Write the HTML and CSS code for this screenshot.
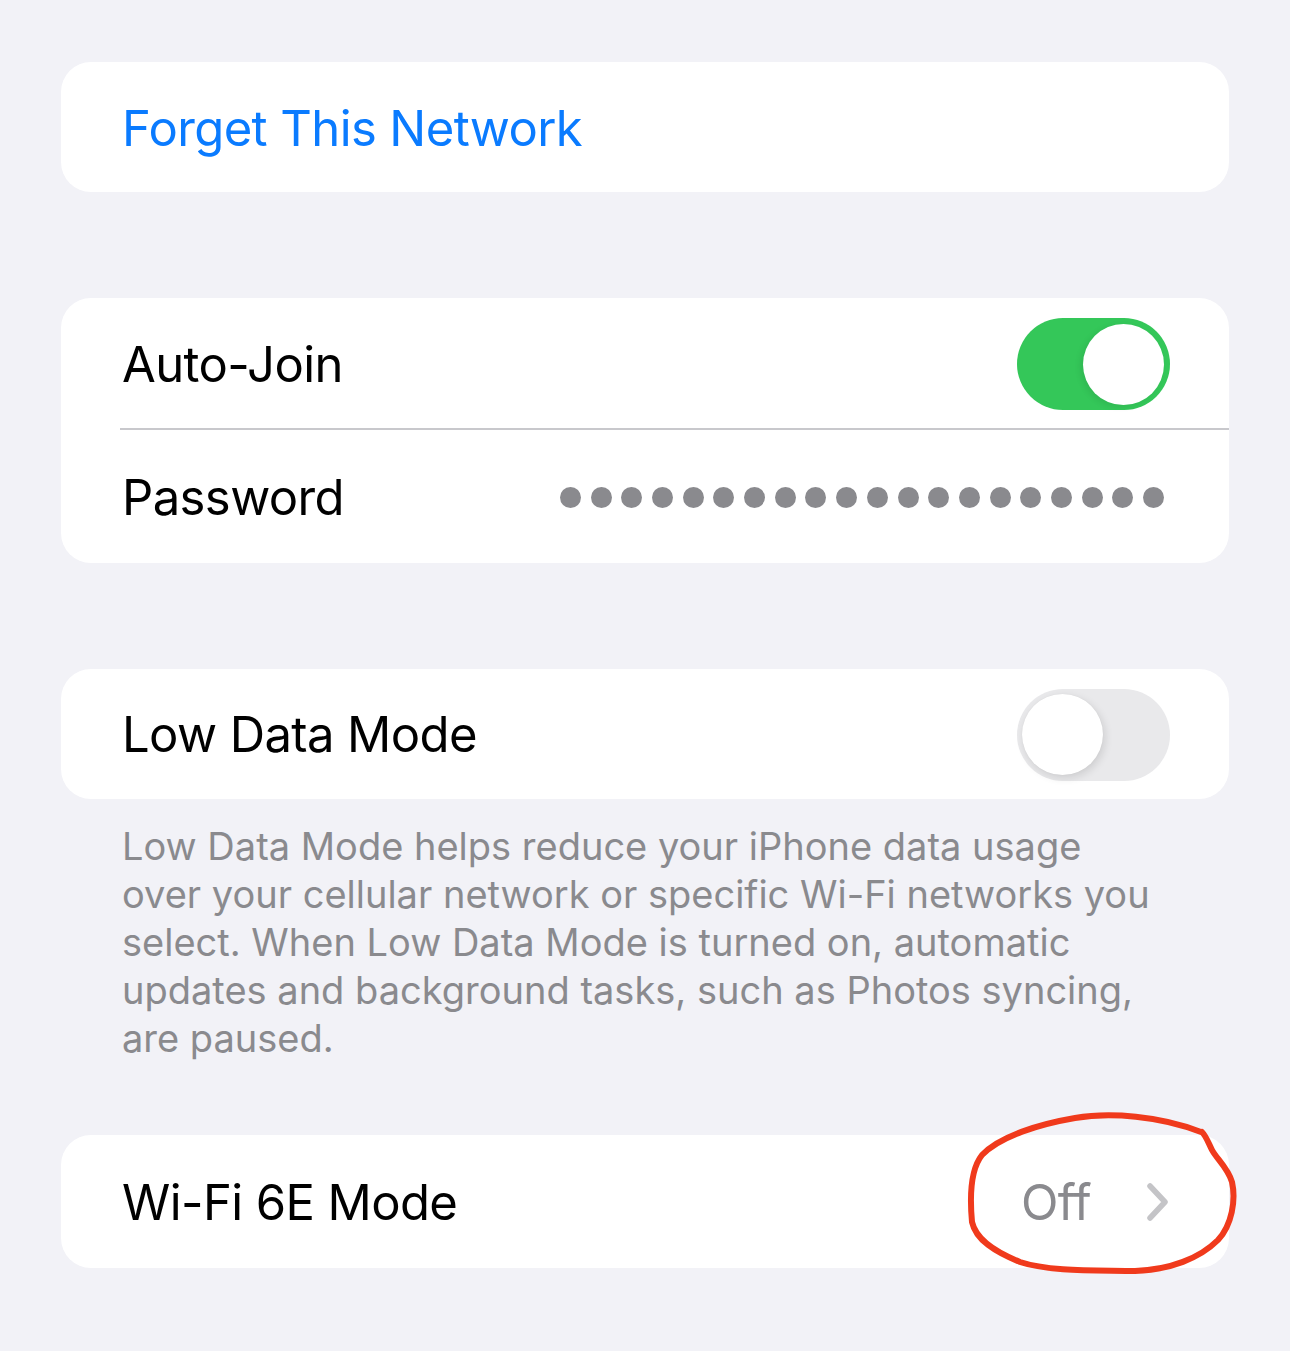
FILE: index.html
```html
<!DOCTYPE html>
<html lang="en">
<head>
<meta charset="utf-8">
<title>Wi-Fi Network</title>
<link rel="stylesheet" href="styles.css">
</head>
<body>
<main class="page">
  <section class="card">
    <div class="row"><span class="label link">Forget This Network</span></div>
  </section>

  <section class="card">
    <div class="row">
      <span class="label">Auto-Join</span>
      <span class="toggle on"><span class="knob"></span></span>
    </div>
    <div class="sep"></div>
    <div class="row row-tall">
      <span class="label">Password</span>
      <span class="dots">
        <i></i><i></i><i></i><i></i><i></i><i></i><i></i><i></i><i></i><i></i>
        <i></i><i></i><i></i><i></i><i></i><i></i><i></i><i></i><i></i><i></i>
      </span>
    </div>
  </section>

  <section class="card card-with-footer">
    <div class="row">
      <span class="label">Low Data Mode</span>
      <span class="toggle off"><span class="knob"></span></span>
    </div>
  </section>
  <p class="footer">Low Data Mode helps reduce your iPhone data usage over your cellular network or specific Wi-Fi networks you select. When Low Data Mode is turned on, automatic updates and background tasks, such as Photos syncing, are paused.</p>

  <section class="card">
    <div class="row row-tall">
      <span class="label">Wi-Fi 6E Mode</span>
      <span class="value">
        <span class="value-text">Off</span>
        <svg class="chev" width="24" height="38" viewBox="0 0 24 38"><path d="M4 3 L19 19 L4 35" fill="none" stroke="#c4c4c7" stroke-width="5.5" stroke-linecap="round" stroke-linejoin="round"/></svg>
      </span>
    </div>
  </section>
</main>
<svg class="annot" width="1290" height="1351" viewBox="0 0 1290 1351">
  <path d="M1201 1132 C1160 1116 1110 1112 1075 1118 C1040 1124 1000 1136 982 1155 C970 1170 970 1200 972 1222 C976 1240 995 1252 1020 1262 C1050 1272 1100 1270 1135 1271 C1170 1270 1200 1258 1218 1240 C1232 1225 1236 1200 1232 1182 C1228 1168 1216 1158 1212 1150 C1208 1142 1206 1136 1202 1132" fill="none" stroke="#f03a1c" stroke-width="6" stroke-linecap="round" stroke-linejoin="round"/>
</svg>
</body>
</html>
```

FILE: styles.css
```css
html, body {
  margin: 0;
  padding: 0;
}
body {
  background: #f2f2f7;
  font-family: Inter, "Noto Sans", "Liberation Sans", sans-serif;
  position: relative;
  width: 1290px;
  min-height: 1351px;
  overflow: hidden;
}
.page {
  padding: 62px 61px 0 61px;
  display: flex;
  flex-direction: column;
}
.card {
  background: #ffffff;
  border-radius: 30px;
  margin-bottom: 106px;
}
.card:last-child { margin-bottom: 0; }
.card.card-with-footer { margin-bottom: 0; }
.row {
  height: 130px;
  display: flex;
  align-items: center;
  justify-content: space-between;
  padding: 2px 59px 0 61px;
  box-sizing: border-box;
}
.row-tall { height: 133px; }
.label {
  font-size: 49px;
  letter-spacing: -0.6px;
  color: #000;
}
.link { color: #0a7bff; }
.sep {
  height: 1.5px;
  background: #c8c8cc;
  margin-left: 59px;
}
.toggle {
  width: 153px;
  height: 92px;
  border-radius: 46px;
  position: relative;
  flex-shrink: 0;
}
.toggle.on { background: #34c759; }
.toggle.off { background: #e9e9eb; }
.knob {
  position: absolute;
  top: 5.5px;
  width: 81px;
  height: 81px;
  border-radius: 50%;
  background: #fff;
}
.toggle.on .knob {
  right: 6px;
  box-shadow: -3px 2px 6px rgba(0,0,0,0.08);
}
.toggle.off .knob {
  left: 5px;
  box-shadow: 2px 3px 8px rgba(0,0,0,0.12), 0 0 1px rgba(0,0,0,0.08);
}
.dots {
  display: flex;
  gap: 9.7px;
  margin-right: 6px;
}
.dots i {
  display: block;
  width: 21px;
  height: 21px;
  border-radius: 50%;
  background: #8a8a8e;
}
.footer {
  margin: 0 0 73px 0;
  padding: 23px 64px 0 61px;
  font-size: 38px;
  line-height: 48px;
  letter-spacing: 0;
  color: #8a8a8e;
}
.value {
  display: flex;
  align-items: center;
  gap: 55px;
}
.value-text {
  font-size: 49px;
  letter-spacing: -0.6px;
  color: #8a8a8e;
}
.chev { display: block; }
.annot {
  position: absolute;
  left: 0;
  top: 0;
  pointer-events: none;
}
```
